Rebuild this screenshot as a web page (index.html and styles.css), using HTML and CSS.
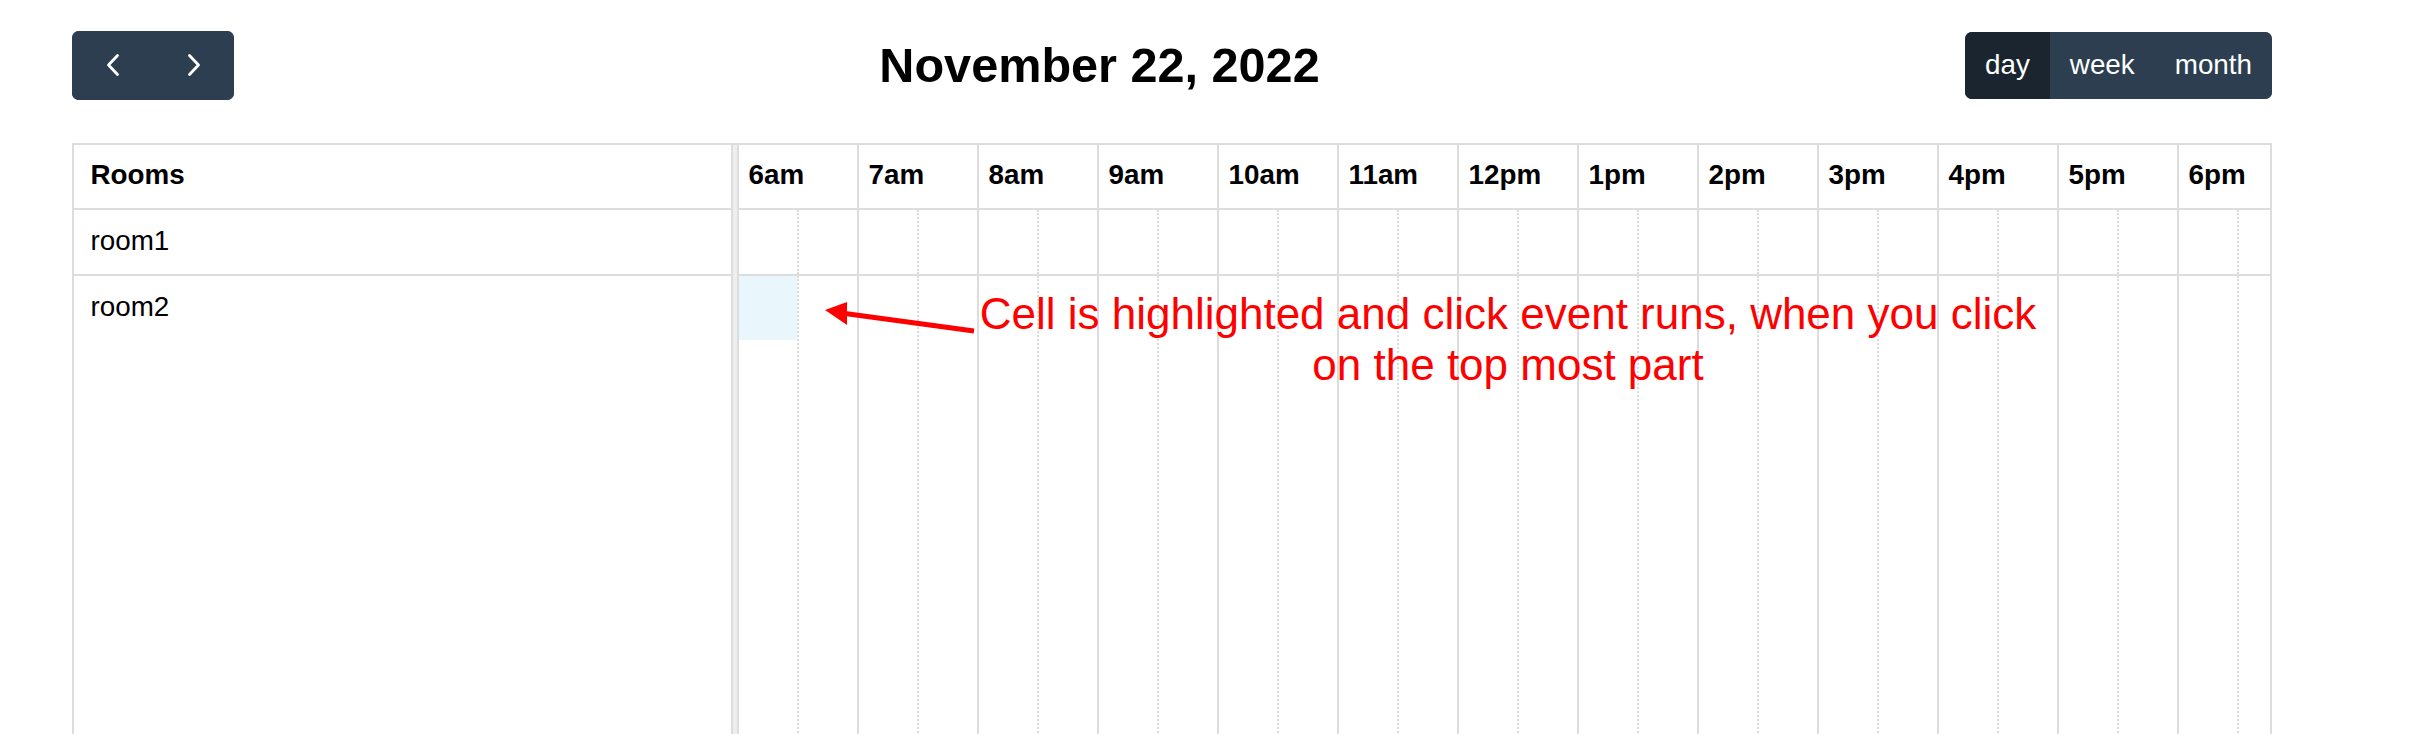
FILE: index.html
```html
<!DOCTYPE html>
<html lang="en">
<head>
<meta charset="utf-8">
<title>Rooms timeline</title>
<link rel="stylesheet" href="styles.css">
</head>
<body>
<div class="page">
  <div class="toolbar">
    <div class="btn-group nav">
      <button class="btn icon-btn" aria-label="prev">
        <svg class="chev" viewBox="0 0 14 24" width="14" height="24"><path d="M11.5 2.5 L2.5 12 L11.5 21.5"/></svg>
      </button>
      <button class="btn icon-btn" aria-label="next">
        <svg class="chev" viewBox="0 0 14 24" width="14" height="24"><path d="M2.5 2.5 L11.5 12 L2.5 21.5"/></svg>
      </button>
    </div>
    <h2 class="title">November 22, 2022</h2>
    <div class="btn-group views">
      <button class="btn active">day</button>
      <button class="btn">week</button>
      <button class="btn">month</button>
    </div>
  </div>

  <div class="view">
    <div class="res-area">
      <div class="res-cell res-head">Rooms</div>
      <div class="res-cell res-row1">room1</div>
      <div class="res-cell res-row2">room2</div>
    </div>
    <div class="divider"></div>
    <div class="time-area">
      <div class="t-row t-head">
        <div class="t-hour">6am</div>
        <div class="t-hour">7am</div>
        <div class="t-hour">8am</div>
        <div class="t-hour">9am</div>
        <div class="t-hour">10am</div>
        <div class="t-hour">11am</div>
        <div class="t-hour">12pm</div>
        <div class="t-hour">1pm</div>
        <div class="t-hour">2pm</div>
        <div class="t-hour">3pm</div>
        <div class="t-hour">4pm</div>
        <div class="t-hour">5pm</div>
        <div class="t-hour">6pm</div>
      </div>
      <div class="t-row t-row1">
        <div class="t-hour"><div class="half"></div><div class="half"></div></div>
        <div class="t-hour"><div class="half"></div><div class="half"></div></div>
        <div class="t-hour"><div class="half"></div><div class="half"></div></div>
        <div class="t-hour"><div class="half"></div><div class="half"></div></div>
        <div class="t-hour"><div class="half"></div><div class="half"></div></div>
        <div class="t-hour"><div class="half"></div><div class="half"></div></div>
        <div class="t-hour"><div class="half"></div><div class="half"></div></div>
        <div class="t-hour"><div class="half"></div><div class="half"></div></div>
        <div class="t-hour"><div class="half"></div><div class="half"></div></div>
        <div class="t-hour"><div class="half"></div><div class="half"></div></div>
        <div class="t-hour"><div class="half"></div><div class="half"></div></div>
        <div class="t-hour"><div class="half"></div><div class="half"></div></div>
        <div class="t-hour"><div class="half"></div><div class="half"></div></div>
      </div>
      <div class="t-row t-row2">
        <div class="t-hour"><div class="half"><div class="hl"></div></div><div class="half"></div></div>
        <div class="t-hour"><div class="half"></div><div class="half"></div></div>
        <div class="t-hour"><div class="half"></div><div class="half"></div></div>
        <div class="t-hour"><div class="half"></div><div class="half"></div></div>
        <div class="t-hour"><div class="half"></div><div class="half"></div></div>
        <div class="t-hour"><div class="half"></div><div class="half"></div></div>
        <div class="t-hour"><div class="half"></div><div class="half"></div></div>
        <div class="t-hour"><div class="half"></div><div class="half"></div></div>
        <div class="t-hour"><div class="half"></div><div class="half"></div></div>
        <div class="t-hour"><div class="half"></div><div class="half"></div></div>
        <div class="t-hour"><div class="half"></div><div class="half"></div></div>
        <div class="t-hour"><div class="half"></div><div class="half"></div></div>
        <div class="t-hour"><div class="half"></div><div class="half"></div></div>
      </div>
    </div>
  </div>

  <svg class="arrow" viewBox="0 0 160 45" width="160" height="45">
    <line x1="25" y1="18.5" x2="154" y2="36" />
    <polygon points="5,15 27,7 27,30" />
  </svg>
  <div class="note">Cell is highlighted and click event runs, when you click<br>on the top most part</div>
</div>
</body>
</html>
```

FILE: styles.css
```css
* { box-sizing: border-box; }

html, body {
  margin: 0;
  height: 734px;
  overflow: hidden;
  background: #fff;
}

body {
  font-family: "Liberation Sans", Arial, Helvetica, sans-serif;
  color: #000;
}

.page {
  position: relative;
  width: 2272px;
  padding: 30px 0 0 72px;
}

.toolbar {
  display: flex;
  justify-content: space-between;
  align-items: center;
  height: 70px;
  margin-bottom: 43px;
}

.btn-group {
  display: flex;
  border-radius: 7px;
  overflow: hidden;
  background: #2c3e50;
}

.nav { height: 69px; }
.views { height: 67px; }

.btn {
  border: 0;
  margin: 0;
  background: #2c3e50;
  color: #fff;
  font-family: "Liberation Sans", Arial, Helvetica, sans-serif;
  font-size: 27.8px;
  display: flex;
  align-items: center;
  justify-content: center;
  padding: 0 20px;
  height: 100%;
}

.btn.active { background: #1a252f; }

.icon-btn {
  width: 81px;
  padding: 0;
}

.chev {
  display: block;
  fill: none;
  stroke: #fff;
  stroke-width: 2.8;
  stroke-linecap: round;
  stroke-linejoin: round;
}

.title {
  margin: 0;
  font-size: 48.6px;
  font-weight: bold;
  line-height: 56px;
}

.view {
  display: flex;
  width: 2200px;
  height: 620px;
  border: 2px solid #ddd;
  border-bottom: 0;
}

.res-area {
  width: 657px;
  flex: none;
}

.res-cell {
  font-size: 27.8px;
  line-height: 32px;
  padding: 14px 0 0 16.5px;
  border-bottom: 2px solid #ddd;
}

.res-head { height: 65px; font-weight: bold; }
.res-row1 { height: 66px; padding-top: 15px; }
.res-row2 { border-bottom: 0; padding-top: 15px; }

.divider {
  width: 6px;
  flex: none;
  border-left: 2px solid #ddd;
  background: #eee;
}

.time-area {
  flex: 1;
  overflow: hidden;
}

.t-row {
  display: flex;
  width: 1560px;
  border-bottom: 2px solid #ddd;
}

.t-hour {
  width: 120px;
  flex: none;
  display: flex;
  border-left: 2px solid #ddd;
}

.t-head { height: 65px; }

.t-head .t-hour {
  display: block;
  font-size: 27.8px;
  line-height: 32px;
  font-weight: bold;
  padding: 14px 0 0 9.5px;
}

.t-row1 { height: 66px; }
.t-row2 { height: 500px; border-bottom: 0; }

.half { width: 58px; flex: none; }
.half + .half {
  flex: 1;
  border-left: 2px dotted #dcdcdc;
}

.hl {
  height: 64px;
  background: #e9f6fb;
}

.arrow {
  position: absolute;
  left: 820px;
  top: 295px;
}

.arrow line {
  stroke: #fe0000;
  stroke-width: 5;
}

.arrow polygon { fill: #fe0000; }

.note {
  position: absolute;
  left: 958px;
  top: 288px;
  width: 1100px;
  text-align: center;
  color: #fe0000;
  font-size: 44px;
  line-height: 51px;
}
```
